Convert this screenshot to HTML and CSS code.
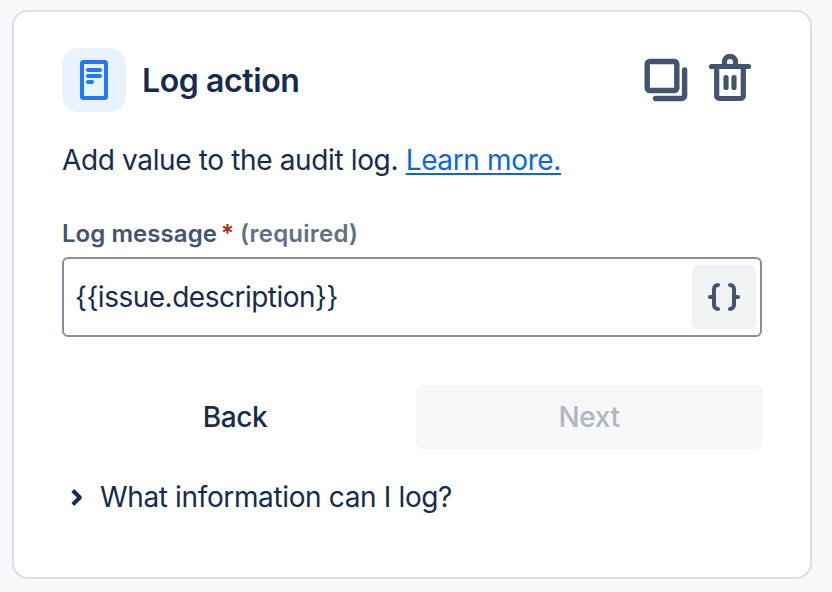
FILE: index.html
```html
<!DOCTYPE html>
<html lang="en">
<head>
<meta charset="utf-8">
<title>Log action</title>
<link rel="stylesheet" href="styles.css">
</head>
<body>
<main class="card">
  <header class="header">
    <span class="badge">
      <svg width="64" height="64" viewBox="0 0 64 64" fill="none" stroke="#1d7afc" stroke-width="4" stroke-linecap="round">
        <rect x="20" y="14" width="24" height="36" rx="1.5"/>
        <path d="M26 22H38M26 28H38M26 34H30"/>
      </svg>
    </span>
    <h1 class="title">Log action</h1>
    <div class="tools">
      <button class="tool" aria-label="Duplicate">
        <svg width="48" height="64" viewBox="0 0 48 64" fill="none" stroke="#44546f" stroke-width="5.4" stroke-linecap="round">
          <rect x="5.2" y="13.500" width="29.600" height="29" rx="2.500"/>
          <path d="M42.600 22V47.500A3 3 0 0 1 39.600 50.500H13.500"/>
        </svg>
      </button>
      <button class="tool" aria-label="Delete">
        <svg width="48" height="64" viewBox="0 0 48 64" fill="none" stroke="#44546f" stroke-width="5.2" stroke-linecap="round">
          <path d="M5.500 18.500H42.500"/>
          <path d="M18.500 18V13.800A5.500 5.500 0 0 1 29.500 13.800V18" stroke-linecap="butt"/>
          <path d="M10.700 19V48A2.500 2.500 0 0 0 13.200 50.500H34.800A2.500 2.500 0 0 0 37.300 48V19M20 29.500V39.500M28 29.500V39.500"/>
        </svg>
      </button>
    </div>
  </header>
  <p class="intro">Add value to the audit log. <a class="link" href="#">Learn more.</a></p>
  <label class="label" for="message"><span class="name">Log message</span><span class="star">*</span><span class="required">(required)</span></label>
  <div class="field">
    <input class="input" id="message" type="text" value="{{issue.description}}">
    <button class="insert" aria-label="Insert smart value">
      <svg width="64" height="64" viewBox="0 0 64 64" fill="none" stroke="#44546f" stroke-width="4" stroke-linecap="round" stroke-linejoin="round">
        <path d="M26 20A4 4 0 0 0 22 24V40A4 4 0 0 0 26 44M22 32H18M38 20A4 4 0 0 1 42 24V40A4 4 0 0 1 38 44M42 32H46"/>
      </svg>
    </button>
  </div>
  <div class="actions">
    <button class="button">Back</button>
    <button class="button next" disabled>Next</button>
  </div>
  <div class="more">
    <svg width="30" height="32" viewBox="0 0 30 32" fill="none" stroke="#172b4d" stroke-width="4" stroke-linejoin="round">
      <path d="M10.800 9.500L17.800 16.500L10.800 23.500"/>
    </svg>
    <span class="question">What information can I log?</span>
  </div>
</main>
</body>
</html>
```
FILE: styles.css
```css
* { box-sizing: border-box; }

body {
  margin: 0;
  padding: 10px 20px 0 12px;
  height: 592px;
  background: #f7f8f9;
  color: #172b4d;
  font: 400 28px/40px Inter, sans-serif;
  letter-spacing: -0.36px;
}

button {
  border: 0;
  padding: 0;
  background: none;
  color: inherit;
  font: inherit;
}

svg { display: block; }

.card {
  height: 569px;
  padding: 36px 48px;
  border: 2px solid #dcdfe4;
  border-radius: 16px;
  background: #fff;
}

.header { display: flex; align-items: center; height: 64px; }
.badge { border-radius: 16px; background: #e9f2ff; }
.title {
  margin: 2px 0 0 16px;
  font-size: 32px;
  font-weight: 600;
  letter-spacing: -0.4px;
}
.tools { display: flex; gap: 16px; margin: 0 8px 0 auto; }

.intro { margin: 28px 0 0; white-space: nowrap; }
.link { color: #0c66e4; text-decoration-thickness: 2px; text-underline-offset: 3px; }

.label {
  display: flex;
  height: 32px;
  margin-top: 38px;
  color: #44546f;
  font-size: 24px;
  font-weight: 600;
  line-height: 32px;
  letter-spacing: 0.05px;
}
.star { margin-left: 4px; color: #ae2a19; }
.required { margin-left: 6px; color: #626f86; letter-spacing: 0.25px; }

.field {
  display: flex;
  align-items: center;
  height: 80px;
  margin-top: 7px;
  padding: 0 4px 0 11px;
  border: 2px solid #8590a2;
  border-radius: 6px;
}
.input {
  flex: 1;
  min-width: 0;
  padding: 0;
  border: 0;
  outline: 0;
  color: inherit;
  font: inherit;
  letter-spacing: -0.5px;
}
.insert { border-radius: 6px; background: #f1f2f4; }

.actions {
  display: grid;
  grid-template-columns: 1fr 1fr;
  gap: 8px;
  margin-top: 48px;
}
.button { height: 64px; border-radius: 6px; font-weight: 500; letter-spacing: -0.4px; }
.next { background: #f7f7f7; color: #b0b6c2; }

.more { display: flex; align-items: center; gap: 8px; height: 40px; margin-top: 28px; white-space: nowrap; }
```
